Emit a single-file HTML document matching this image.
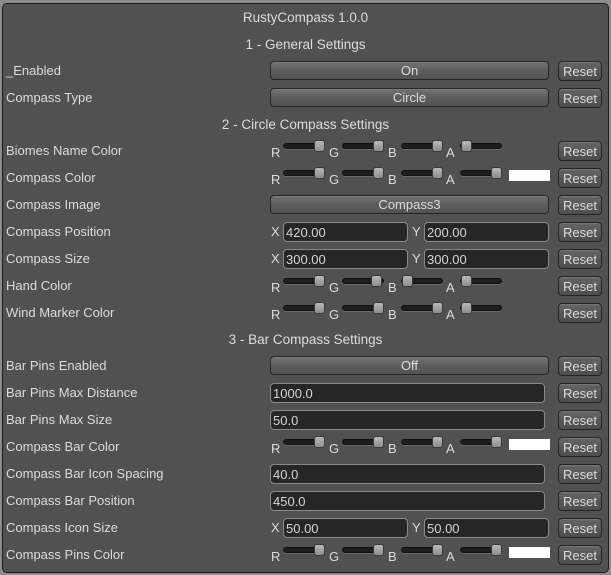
<!DOCTYPE html>
<html><head><meta charset="utf-8"><style>
*{box-sizing:border-box;margin:0;padding:0}
body{width:611px;height:575px;background:#8c8c8c;position:relative;overflow:hidden;font-family:"Liberation Sans",sans-serif;font-size:13px;color:#dcdcdc}
.win{position:absolute;left:2px;top:3px;width:607px;height:570px;background:#515151;border:1px solid #1c1c1c;border-radius:5px}
.a{position:absolute;white-space:nowrap}
.lbl{left:6px;height:20px;line-height:20px}
.hd{left:0;width:611px;text-align:center;line-height:20px;font-size:13.5px}
.btn{left:270px;width:279px;height:19px;line-height:18px;text-align:center;border:1px solid #262626;border-radius:4px;background:linear-gradient(#727272,#5e5e5e 50%,#525252);box-shadow:inset 0 1px 0 #7c7c7c}
.rs{left:558px;width:44px;height:20px;line-height:19px;text-align:center;border:1px solid #242424;border-radius:4px;background:linear-gradient(#666,#585858 50%,#4e4e4e);box-shadow:inset 0 1px 0 #777}
.tf{height:20px;line-height:19px;padding-left:2px;background:#262626;border:1px solid #8a8a8a;border-radius:4px;color:#d4d4d4}
.tr{width:42px;height:6px;background:#1e1e1e;border:1px solid #101010;border-radius:3px;box-shadow:0 1px 0 #6a6a6a}
.th{width:11px;height:12px;border-radius:3px;background:linear-gradient(#b8b8b8,#8e8e8e);border:1px solid #3a3a3a}
.sl{height:14px;line-height:14px}
.sw{width:41px;height:11px;background:#fff}
</style></head><body>
<div class="win"></div>
<div class="a hd" style="top:8px">RustyCompass 1.0.0</div>
<div class="a hd" style="top:35px">1 - General Settings</div>
<div class="a hd" style="top:115px">2 - Circle Compass Settings</div>
<div class="a hd" style="top:330px">3 - Bar Compass Settings</div>

<div class="a lbl" style="top:61px">_Enabled</div>
<div class="a btn" style="top:61px">On</div><div class="a rs" style="top:61px">Reset</div>
<div class="a lbl" style="top:88px">Compass Type</div>
<div class="a btn" style="top:88px">Circle</div><div class="a rs" style="top:88px">Reset</div>

<div class="a lbl" style="top:141px">Biomes Name Color</div><div class="a rs" style="top:141px">Reset</div>
<div class="a lbl" style="top:168px">Compass Color</div><div class="a rs" style="top:168px">Reset</div>
<div class="a lbl" style="top:195px">Compass Image</div>
<div class="a btn" style="top:195px">Compass3</div><div class="a rs" style="top:195px">Reset</div>
<div class="a lbl" style="top:222px">Compass Position</div><div class="a rs" style="top:222px">Reset</div>
<div class="a lbl" style="top:249px">Compass Size</div><div class="a rs" style="top:249px">Reset</div>
<div class="a lbl" style="top:276px">Hand Color</div><div class="a rs" style="top:276px">Reset</div>
<div class="a lbl" style="top:303px">Wind Marker Color</div><div class="a rs" style="top:303px">Reset</div>

<div class="a lbl" style="top:356px">Bar Pins Enabled</div>
<div class="a btn" style="top:356px">Off</div><div class="a rs" style="top:356px">Reset</div>
<div class="a lbl" style="top:383px">Bar Pins Max Distance</div>
<div class="a tf" style="top:383px;left:270px;width:275px">1000.0</div><div class="a rs" style="top:383px">Reset</div>
<div class="a lbl" style="top:410px">Bar Pins Max Size</div>
<div class="a tf" style="top:410px;left:270px;width:275px">50.0</div><div class="a rs" style="top:410px">Reset</div>
<div class="a lbl" style="top:437px">Compass Bar Color</div><div class="a rs" style="top:437px">Reset</div>
<div class="a lbl" style="top:464px">Compass Bar Icon Spacing</div>
<div class="a tf" style="top:464px;left:270px;width:275px">40.0</div><div class="a rs" style="top:464px">Reset</div>
<div class="a lbl" style="top:491px">Compass Bar Position</div>
<div class="a tf" style="top:491px;left:270px;width:275px">450.0</div><div class="a rs" style="top:491px">Reset</div>
<div class="a lbl" style="top:518px">Compass Icon Size</div><div class="a rs" style="top:518px">Reset</div>
<div class="a lbl" style="top:545px">Compass Pins Color</div><div class="a rs" style="top:545px">Reset</div>

<div class="a" style="top:222px;left:271px;line-height:20px">X</div>
<div class="a tf" style="top:222px;left:283px;width:125px">420.00</div>
<div class="a" style="top:222px;left:412px;line-height:20px">Y</div>
<div class="a tf" style="top:222px;left:424px;width:125px">200.00</div>
<div class="a" style="top:249px;left:271px;line-height:20px">X</div>
<div class="a tf" style="top:249px;left:283px;width:125px">300.00</div>
<div class="a" style="top:249px;left:412px;line-height:20px">Y</div>
<div class="a tf" style="top:249px;left:424px;width:125px">300.00</div>
<div class="a" style="top:518px;left:271px;line-height:20px">X</div>
<div class="a tf" style="top:518px;left:283px;width:125px">50.00</div>
<div class="a" style="top:518px;left:412px;line-height:20px">Y</div>
<div class="a tf" style="top:518px;left:424px;width:125px">50.00</div>

<div class="a sl" style="top:146px;left:271px">R</div><div class="a sl" style="top:146px;left:329px">G</div><div class="a sl" style="top:146px;left:388px">B</div><div class="a sl" style="top:146px;left:446px">A</div>
<div class="a tr" style="top:143px;left:283px"></div><div class="a th" style="top:140px;left:314px"></div>
<div class="a tr" style="top:143px;left:342px"></div><div class="a th" style="top:140px;left:373px"></div>
<div class="a tr" style="top:143px;left:401px"></div><div class="a th" style="top:140px;left:432px"></div>
<div class="a tr" style="top:143px;left:460px"></div><div class="a th" style="top:140px;left:461px"></div>

<div class="a sl" style="top:173px;left:271px">R</div><div class="a sl" style="top:173px;left:329px">G</div><div class="a sl" style="top:173px;left:388px">B</div><div class="a sl" style="top:173px;left:446px">A</div>
<div class="a tr" style="top:170px;left:283px"></div><div class="a th" style="top:167px;left:314px"></div>
<div class="a tr" style="top:170px;left:342px"></div><div class="a th" style="top:167px;left:373px"></div>
<div class="a tr" style="top:170px;left:401px"></div><div class="a th" style="top:167px;left:432px"></div>
<div class="a tr" style="top:170px;left:460px"></div><div class="a th" style="top:167px;left:491px"></div>
<div class="a sw" style="top:170px;left:509px"></div>

<div class="a sl" style="top:281px;left:271px">R</div><div class="a sl" style="top:281px;left:329px">G</div><div class="a sl" style="top:281px;left:388px">B</div><div class="a sl" style="top:281px;left:446px">A</div>
<div class="a tr" style="top:278px;left:283px"></div><div class="a th" style="top:275px;left:314px"></div>
<div class="a tr" style="top:278px;left:342px"></div><div class="a th" style="top:275px;left:371px"></div>
<div class="a tr" style="top:278px;left:401px"></div><div class="a th" style="top:275px;left:402px"></div>
<div class="a tr" style="top:278px;left:460px"></div><div class="a th" style="top:275px;left:461px"></div>

<div class="a sl" style="top:308px;left:271px">R</div><div class="a sl" style="top:308px;left:329px">G</div><div class="a sl" style="top:308px;left:388px">B</div><div class="a sl" style="top:308px;left:446px">A</div>
<div class="a tr" style="top:305px;left:283px"></div><div class="a th" style="top:302px;left:314px"></div>
<div class="a tr" style="top:305px;left:342px"></div><div class="a th" style="top:302px;left:373px"></div>
<div class="a tr" style="top:305px;left:401px"></div><div class="a th" style="top:302px;left:432px"></div>
<div class="a tr" style="top:305px;left:460px"></div><div class="a th" style="top:302px;left:461px"></div>

<div class="a sl" style="top:442px;left:271px">R</div><div class="a sl" style="top:442px;left:329px">G</div><div class="a sl" style="top:442px;left:388px">B</div><div class="a sl" style="top:442px;left:446px">A</div>
<div class="a tr" style="top:439px;left:283px"></div><div class="a th" style="top:436px;left:314px"></div>
<div class="a tr" style="top:439px;left:342px"></div><div class="a th" style="top:436px;left:373px"></div>
<div class="a tr" style="top:439px;left:401px"></div><div class="a th" style="top:436px;left:432px"></div>
<div class="a tr" style="top:439px;left:460px"></div><div class="a th" style="top:436px;left:491px"></div>
<div class="a sw" style="top:439px;left:509px"></div>

<div class="a sl" style="top:550px;left:271px">R</div><div class="a sl" style="top:550px;left:329px">G</div><div class="a sl" style="top:550px;left:388px">B</div><div class="a sl" style="top:550px;left:446px">A</div>
<div class="a tr" style="top:547px;left:283px"></div><div class="a th" style="top:544px;left:314px"></div>
<div class="a tr" style="top:547px;left:342px"></div><div class="a th" style="top:544px;left:373px"></div>
<div class="a tr" style="top:547px;left:401px"></div><div class="a th" style="top:544px;left:432px"></div>
<div class="a tr" style="top:547px;left:460px"></div><div class="a th" style="top:544px;left:491px"></div>
<div class="a sw" style="top:547px;left:509px"></div>
</body></html>
